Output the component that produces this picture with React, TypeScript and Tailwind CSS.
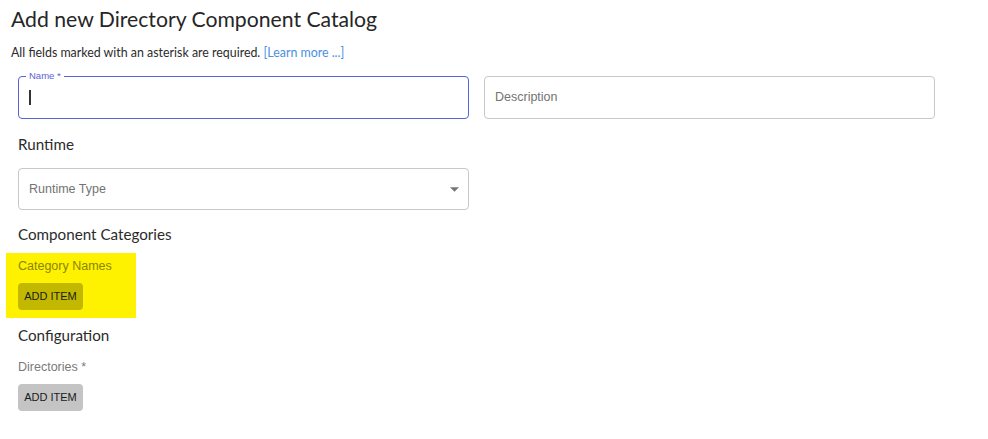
const plex = "font-['Lato','Noto_Sans',sans-serif]";
const arial = "font-['Liberation_Sans',Arial,sans-serif]";

function Heading({ children }: { children: React.ReactNode }) {
  return (
    <h2 className={`${plex} text-[15.2px] leading-[20px] text-[#2b2b2b]`}>
      {children}
    </h2>
  );
}

function AddButton({ bg }: { bg: string }) {
  return (
    <div
      className={`${arial} ${bg} w-[65px] h-[27px] rounded-[4px] flex items-center justify-center text-[11px] text-[#1a1a1a]`}
    >
      ADD ITEM
    </div>
  );
}

export default function App() {
  return (
    <div className="w-[988px] h-[439px] bg-white overflow-hidden px-[11px] pt-[6px]">
      <h1 className={`${plex} text-[21.2px] leading-[26px] text-[#262626]`}>
        Add new Directory Component Catalog
      </h1>
      <p className={`${plex} text-[12.4px] leading-[16px] text-[#2b2b2b] mt-[13px]`}>
        All fields marked with an asterisk are required.{" "}
        <span className="text-[#4a90e2]">[Learn more ...]</span>
      </p>

      <div className="pl-[7px] mt-[15px] flex gap-[15px]">
        {/* Name - focused */}
        <div className="relative w-[451px] h-[43px] rounded-[4px] border-[1.5px] border-[#5863d6] flex items-center px-[10px]">
          <span
            className={`${arial} absolute -top-[7px] left-[7px] bg-white px-[3px] text-[9.5px] leading-[12px] text-[#5863d6]`}
          >
            Name *
          </span>
          <span className="w-[1.5px] h-[15px] bg-[#333]" />
        </div>
        <div className="w-[451px] h-[43px] rounded-[4px] border border-[#c8c8c8] flex items-center px-[10px]">
          <span className={`${arial} text-[12.5px] text-[#737373]`}>Description</span>
        </div>
      </div>

      <div className="pl-[7px] mt-[15px]">
        <Heading>Runtime</Heading>
        <div className="mt-[14px] w-[451px] h-[42px] rounded-[4px] border border-[#c8c8c8] flex items-center justify-between pl-[10px] pr-[9px]">
          <span className={`${arial} text-[12.5px] text-[#737373]`}>Runtime Type</span>
          <svg width="9" height="5" viewBox="0 0 10 5">
            <path d="M0 0 L10 0 L5 5 Z" fill="#757575" />
          </svg>
        </div>
        <div className="mt-[14px]">
          <Heading>Component Categories</Heading>
        </div>
      </div>

      <div className="mt-[9px] w-[130px] h-[65px] bg-[#fff200] -ml-[5px] pl-[12px] pt-[5px]">
        <div className={`${arial} text-[12.5px] leading-[16px] text-[#8a8500]`}>
          Category Names
        </div>
        <div className="mt-[9px]">
          <AddButton bg="bg-[#c2b800]" />
        </div>
      </div>

      <div className="pl-[7px] mt-[7px]">
        <Heading>Configuration</Heading>
        <div className={`${arial} mt-[14px] text-[12.5px] leading-[16px] text-[#7a7a7a]`}>
          Directories *
        </div>
        <div className="mt-[9px]">
          <AddButton bg="bg-[#c4c4c4]" />
        </div>
      </div>
    </div>
  );
}
